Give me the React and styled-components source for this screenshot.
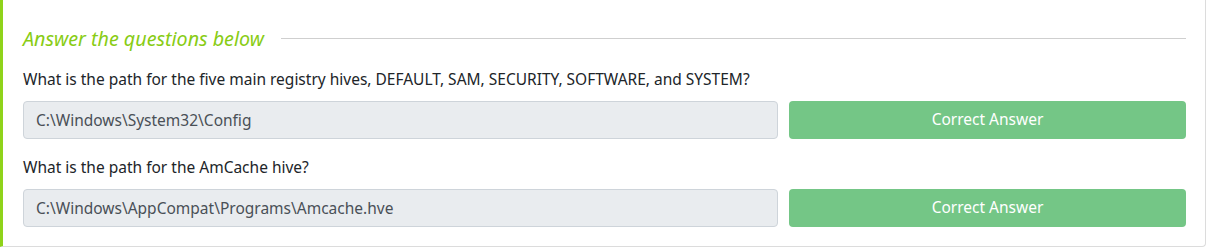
import React from "react";
import styled, { createGlobalStyle } from "styled-components";

const Global = createGlobalStyle`
  html, body { margin: 0; padding: 0; background: #ffffff; }
  body { font-family: "Noto Sans", "Open Sans", sans-serif; }
  * { box-sizing: border-box; }
`;

const Card = styled.section`
  width: 1206px;
  padding: 24px 19px 19px 20px;
  background: #ffffff;
  border: 1px solid #dcdcdc;
  border-top: none;
  border-left: 3px solid #8fd31a;
  border-radius: 0 0 4px 0;
`;

const HeadingRow = styled.div`
  display: flex;
  align-items: center;
  gap: 17px;
  height: 28px;
  margin-bottom: 15px;
`;

const Heading = styled.h3`
  margin: 0;
  font-size: 19.7px;
  font-weight: 400;
  font-style: italic;
  color: #88cc14;
  white-space: nowrap;
`;

const Rule = styled.div`
  flex: 1;
  height: 1px;
  background: #cfcfcf;
`;

const Question = styled.p`
  margin: ${(p) => (p.$first ? "0" : "16px")} 0 10px;
  font-size: 15.5px;
  line-height: 24px;
  color: #212529;
`;

const AnswerRow = styled.div`
  display: grid;
  grid-template-columns: 1fr 397px;
  gap: 11px;
`;

const AnswerBox = styled.div`
  height: 38px;
  display: flex;
  align-items: center;
  padding: 0 12px;
  background: #e9ecef;
  border: 1px solid #ced4da;
  border-radius: 4px;
  font-size: 15.5px;
  color: #495057;
`;

const CorrectButton = styled.button`
  height: 38px;
  padding: 0 0 2px;
  border: none;
  border-radius: 4px;
  background: #74c686;
  color: #ffffff;
  font-family: inherit;
  font-size: 15.5px;
`;

const items = [
  {
    q: "What is the path for the five main registry hives, DEFAULT, SAM, SECURITY, SOFTWARE, and SYSTEM?",
    a: "C:\\Windows\\System32\\Config",
  },
  {
    q: "What is the path for the AmCache hive?",
    a: "C:\\Windows\\AppCompat\\Programs\\Amcache.hve",
  },
];

export default function App() {
  return (
    <>
      <Global />
      <Card>
        <HeadingRow>
          <Heading>Answer the questions below</Heading>
          <Rule />
        </HeadingRow>
        {items.map((it, i) => (
          <div key={i}>
            <Question $first={i === 0}>{it.q}</Question>
            <AnswerRow>
              <AnswerBox>{it.a}</AnswerBox>
              <CorrectButton>Correct Answer</CorrectButton>
            </AnswerRow>
          </div>
        ))}
      </Card>
    </>
  );
}
